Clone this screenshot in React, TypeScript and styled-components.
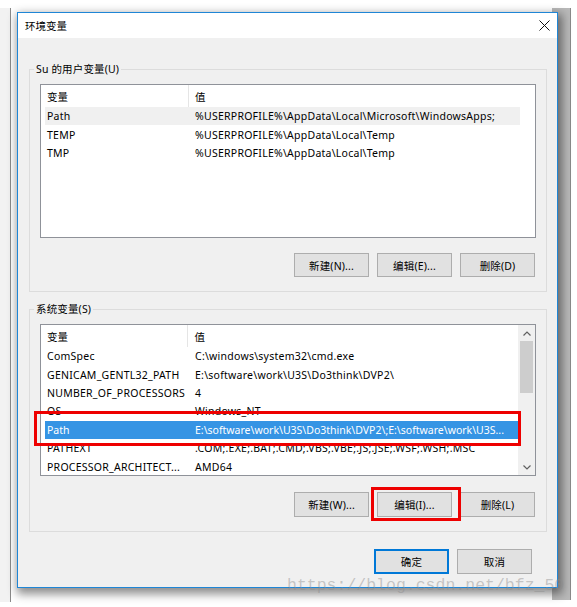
import React from 'react';
import styled, { createGlobalStyle } from 'styled-components';

const GlobalStyle = createGlobalStyle`
  html, body { margin: 0; padding: 0; background: #ffffff; }
  body { font-family: "Noto Sans", "Noto Sans CJK SC", sans-serif; }
  * { box-sizing: border-box; }
`;

const FONT = `"Noto Sans", "Noto Sans CJK SC", sans-serif`;

const Stage = styled.div`
  position: relative;
  width: 577px;
  height: 607px;
  overflow: hidden;
  padding: 12px 0 0 17px;
  background: #ffffff;
`;

const BackWindowLeft = styled.div`
  position: absolute;
  left: -20px;
  top: 8px;
  width: 31px;
  height: 594px;
  background: #f2f2f2;
  border-right: 1px solid #8a8a8a;
`;

const BackWindowRight = styled.div`
  position: absolute;
  left: 552px;
  top: 8px;
  width: 19px;
  height: 592px;
  background: #b9b9b9;
  border-right: 1px solid #8a8a8a;
`;

const Window = styled.div`
  position: relative;
  width: 541px;
  height: 576px;
  border: 1px solid #1f86d6;
  background: #f0f0f0;
  display: flex;
  flex-direction: column;
  box-shadow: 2px 4px 9px 2px rgba(0, 0, 0, 0.45);
  font-family: ${FONT};
  font-size: 10.5px;
  color: #000;
`;

const TitleBar = styled.div`
  height: 25px;
  background: #ffffff;
  display: flex;
  align-items: center;
  justify-content: space-between;
  padding: 0 7px 0 7px;
`;

const Title = styled.span`
  font-size: 10.5px;
  line-height: 14px;
`;

const CloseButton = styled.div`
  width: 12px;
  height: 12px;
  display: flex;
  align-items: center;
  justify-content: center;
`;

const Body = styled.div`
  flex: 1;
  display: flex;
  flex-direction: column;
  padding: 23px 10px 0 11px;
`;

const Group = styled.fieldset<{ $gapTop?: number }>`
  margin: ${(p) => p.$gapTop ?? 0}px 0 0 0;
  border: 1px solid #dcdcdc;
  padding: 7px 10px 14px 10px;
  min-width: 0;
`;

const Legend = styled.legend`
  margin-left: -6px;
  padding: 0 2px;
  font-size: 10.5px;
  line-height: 16px;
  letter-spacing: 0.15px;
`;

const ListBox = styled.div<{ $height: number }>`
  position: relative;
  height: ${(p) => p.$height}px;
  border: 1px solid #8f9299;
  background: #ffffff;
  display: flex;
`;

const ListInner = styled.div`
  flex: 1;
  overflow: hidden;
  padding-left: 4px;
`;

const HeaderRow = styled.div`
  display: flex;
  height: 22px;
  align-items: stretch;
`;

const HeaderCell = styled.div<{ $first?: boolean }>`
  width: ${(p) => (p.$first ? 143 : 332)}px;
  display: flex;
  align-items: center;
  padding-left: ${(p) => (p.$first ? 2 : 6)}px;
  border-left: ${(p) => (p.$first ? 'none' : '1px solid #e5e5e5')};
`;

const Row = styled.div<{ $state?: 'active' | 'inactive' }>`
  display: flex;
  width: 475px;
  height: 18.4px;
  align-items: center;
  white-space: nowrap;
  letter-spacing: ${(p) => (p.$state === 'active' ? 0 : 0.25)}px;
  background: ${(p) =>
    p.$state === 'active' ? '#3594e4' : p.$state === 'inactive' ? '#f0f0f0' : 'transparent'};
  color: ${(p) => (p.$state === 'active' ? '#ffffff' : '#000000')};
`;

const NameCell = styled.div`
  width: 143px;
  padding-left: 2px;
  overflow: hidden;
`;

const ValueCell = styled.div`
  width: 332px;
  padding-left: 7px;
  overflow: hidden;
`;

const ScrollBar = styled.div`
  width: 17px;
  background: #f0f0f0;
  display: flex;
  flex-direction: column;
  align-items: center;
`;

const ScrollArrow = styled.div`
  height: 16px;
  width: 17px;
  display: flex;
  align-items: center;
  justify-content: center;
`;

const ScrollTrack = styled.div`
  flex: 1;
  width: 13px;
`;

const ScrollThumb = styled.div`
  width: 13px;
  height: 52px;
  background: #cdcdcd;
`;

const ButtonRow = styled.div<{ $gap: number }>`
  display: flex;
  justify-content: flex-end;
  gap: 8px;
  margin-top: ${(p) => p.$gap}px;
  padding-right: 1px;
`;

const Button = styled.div<{ $default?: boolean; $height?: number }>`
  width: 75px;
  height: ${(p) => p.$height ?? 24}px;
  display: flex;
  align-items: center;
  justify-content: center;
  background: #e1e1e1;
  border: 1px solid ${(p) => (p.$default ? '#0078d7' : '#adadad')};
  box-shadow: ${(p) => (p.$default ? 'inset 0 0 0 1px #0078d7' : 'none')};
  font-size: 10.5px;
  letter-spacing: 0.15px;
  color: #000;
`;

const Marked = styled.div`
  position: relative;
`;

const RedFrame = styled.div`
  position: absolute;
  border: 3px solid #ee0000;
  pointer-events: none;
`;

const Footer = styled.div`
  display: flex;
  justify-content: flex-end;
  gap: 8px;
  margin-top: 17px;
  padding-right: 15px;
`;

const Watermark = styled.div`
  position: absolute;
  left: 287px;
  top: 576px;
  font-family: "Liberation Mono", "DejaVu Sans Mono", monospace;
  font-size: 16.5px;
  line-height: 20px;
  color: rgba(140, 140, 140, 0.45);
  white-space: nowrap;
  pointer-events: none;
`;

type Item = { name: string; value: string; state?: 'active' | 'inactive' };

const userVars: Item[] = [
  { name: 'Path', value: '%USERPROFILE%\\AppData\\Local\\Microsoft\\WindowsApps;', state: 'inactive' },
  { name: 'TEMP', value: '%USERPROFILE%\\AppData\\Local\\Temp' },
  { name: 'TMP', value: '%USERPROFILE%\\AppData\\Local\\Temp' },
];

const systemVars: Item[] = [
  { name: 'ComSpec', value: 'C:\\windows\\system32\\cmd.exe' },
  { name: 'GENICAM_GENTL32_PATH', value: 'E:\\software\\work\\U3S\\Do3think\\DVP2\\' },
  { name: 'NUMBER_OF_PROCESSORS', value: '4' },
  { name: 'OS', value: 'Windows_NT' },
  { name: 'Path', value: 'E:\\software\\work\\U3S\\Do3think\\DVP2\\;E:\\software\\work\\U3S...', state: 'active' },
  { name: 'PATHEXT', value: '.COM;.EXE;.BAT;.CMD;.VBS;.VBE;.JS;.JSE;.WSF;.WSH;.MSC' },
  { name: 'PROCESSOR_ARCHITECT...', value: 'AMD64' },
];

const Chevron = ({ up }: { up?: boolean }) => (
  <svg width="8" height="5" viewBox="0 0 8 5">
    <polyline
      points={up ? '0.5,4.5 4,1 7.5,4.5' : '0.5,0.5 4,4 7.5,0.5'}
      fill="none"
      stroke="#606060"
      strokeWidth="1.2"
    />
  </svg>
);

const VarList = ({ items, height, scroll }: { items: Item[]; height: number; scroll?: boolean }) => (
  <ListBox $height={height}>
    <ListInner>
      <HeaderRow>
        <HeaderCell $first>变量</HeaderCell>
        <HeaderCell>值</HeaderCell>
      </HeaderRow>
      {items.map((it) => (
        <Row key={it.name} $state={it.state}>
          <NameCell>{it.name}</NameCell>
          <ValueCell>{it.value}</ValueCell>
        </Row>
      ))}
    </ListInner>
    {scroll && (
      <ScrollBar>
        <ScrollArrow>
          <Chevron up />
        </ScrollArrow>
        <ScrollTrack>
          <ScrollThumb />
        </ScrollTrack>
        <ScrollArrow>
          <Chevron />
        </ScrollArrow>
      </ScrollBar>
    )}
    {scroll && <RedFrame style={{ left: -7, top: 86, width: 487, height: 35 }} />}
  </ListBox>
);

export default function App() {
  return (
    <>
      <GlobalStyle />
      <Stage>
        <BackWindowLeft />
        <BackWindowRight />
        <Window>
          <TitleBar>
            <Title>环境变量</Title>
            <CloseButton>
              <svg width="11" height="11" viewBox="0 0 11 11">
                <path d="M0.5 0.5 L10.5 10.5 M10.5 0.5 L0.5 10.5" stroke="#111" strokeWidth="1" />
              </svg>
            </CloseButton>
          </TitleBar>
          <Body>
            <Group>
              <Legend>Su 的用户变量(U)</Legend>
              <VarList items={userVars} height={154} />
              <ButtonRow $gap={15}>
                <Button>新建(N)...</Button>
                <Button>编辑(E)...</Button>
                <Button>删除(D)</Button>
              </ButtonRow>
            </Group>
            <Group $gapTop={9}>
              <Legend>系统变量(S)</Legend>
              <VarList items={systemVars} height={152} scroll />
              <ButtonRow $gap={16}>
                <Button $height={25}>新建(W)...</Button>
                <Marked>
                  <Button $height={25}>编辑(I)...</Button>
                  <RedFrame style={{ left: -6, top: -5, width: 90, height: 34 }} />
                </Marked>
                <Button $height={25}>删除(L)</Button>
              </ButtonRow>
            </Group>
            <Footer>
              <Button $default $height={25}>确定</Button>
              <Button $height={25}>取消</Button>
            </Footer>
          </Body>
        </Window>
        <Watermark>https://blog.csdn.net/bfz_50</Watermark>
      </Stage>
    </>
  );
}
